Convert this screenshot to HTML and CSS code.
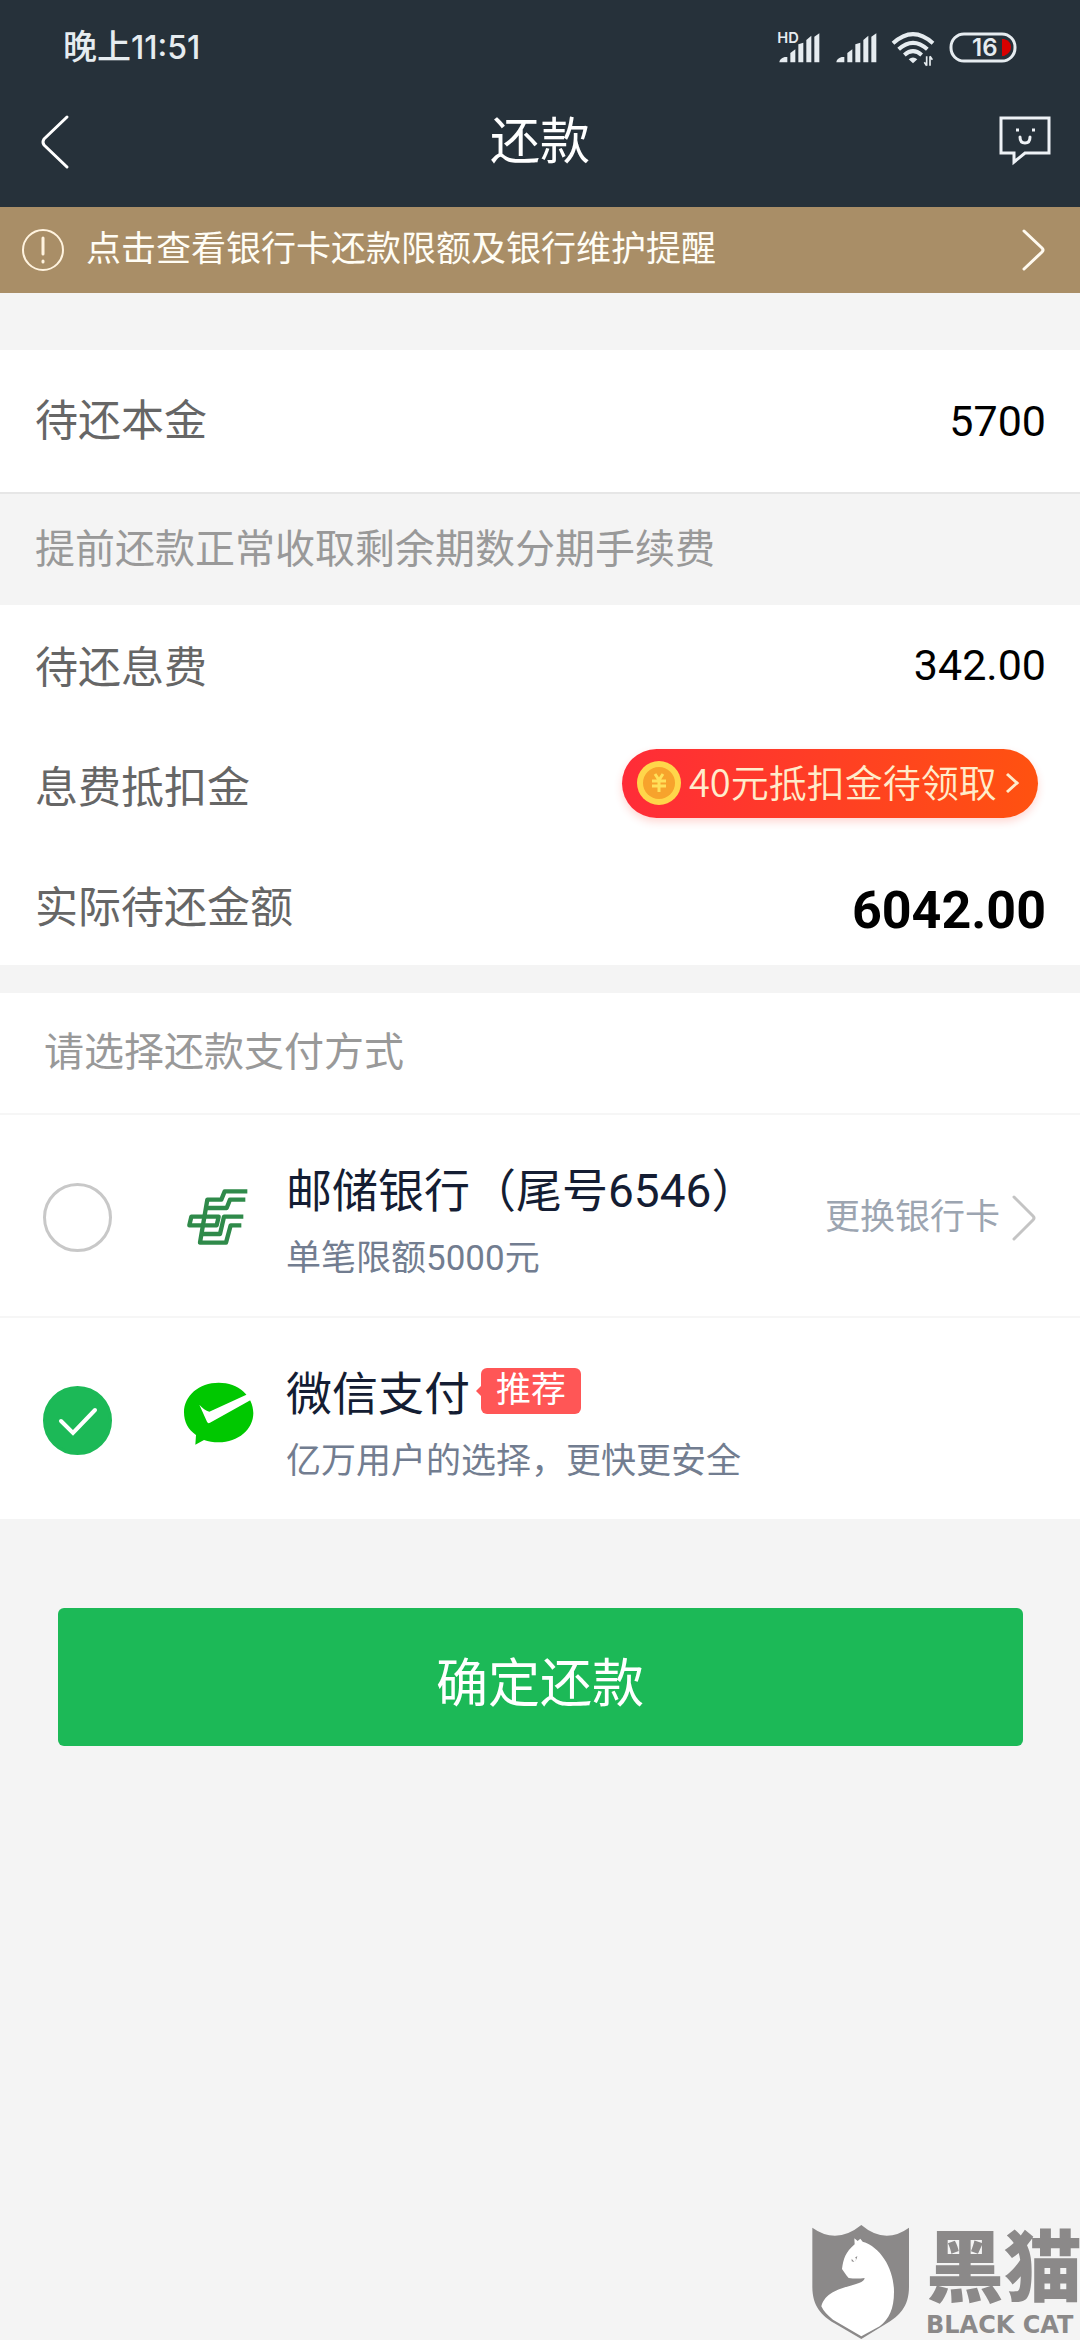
FILE: index.html
```html
<!DOCTYPE html>
<html lang="zh-CN">
<head>
<meta charset="utf-8">
<meta name="viewport" content="width=device-width, initial-scale=1">
<title>还款</title>
<link rel="stylesheet" href="styles.css">
</head>
<body>
<div class="page">
  <div class="top">
    <div class="status">
      <span class="status-time">晚上<time>11:51</time></span>
      <div class="status-icons">
        <svg width="42" height="34" viewBox="0 0 126 102" fill="#e6ecf0">
          <text class="hd" x="-2" y="38">HD</text>
          <path d="M4 97q0-10 16-16h8v16zM37 69l15-11v39H37zM61 55V43l15-5v59H61zM85 30l15-13v80H85zM109 20l15-10v87h-15z"/>
        </svg>
        <svg width="42" height="34" viewBox="0 0 126 102" fill="#e6ecf0">
          <path d="M4 97q0-10 16-16h8v16zM37 69l15-11v39H37zM61 55V43l15-5v59H61zM85 30l15-13v80H85zM109 20l15-10v87h-15z"/>
        </svg>
        <svg width="42" height="34" viewBox="0 0 126 102" fill="none" stroke="#e6ecf0" stroke-width="12">
          <path d="M3 40q60-55 120 0M20 58q43-39 86 0M37 75q26-23 52 0"/>
          <path d="M50 88q13-11 26 0L63 100z" fill="#e6ecf0" stroke="none"/>
          <path d="M104 79v28M114 107V79M97 97l7 10M121 89l-7-10" stroke-width="5"/>
        </svg>
        <svg class="battery" width="68" height="34" viewBox="0 0 68 34">
          <rect x="2" y="4" width="64" height="27" rx="13" fill="none" stroke="#e6ecf0" stroke-width="3"/>
          <path d="M53 9h2q7 2 7 8t-7 9h-2z" fill="#d80000"/>
          <text class="level" x="23" y="26">16</text>
        </svg>
      </div>
    </div>
    <header class="nav">
      <button class="icon-button" type="button" aria-label="返回">
        <svg width="28" height="54" viewBox="0 0 28 54" fill="none" stroke="#fff" stroke-width="3" stroke-linecap="round" stroke-linejoin="round"><path d="M26 2L3 24q-2 3 0 6l23 22"/></svg>
      </button>
      <h1 class="title">还款</h1>
      <button class="icon-button icon-button-end" type="button" aria-label="客服">
        <svg width="52" height="50" viewBox="0 0 52 50" fill="none" stroke="#eef2f6" stroke-width="3"><path d="M2 3h48v35H26l-11 9v-9H2z"/><path d="M21 22q0 6 5 6t5-6" stroke-linecap="round"/><path d="M17 15h3M33 15h3"/></svg>
      </button>
    </header>
  </div>

  <a class="notice" href="#limits">
    <svg width="42" height="44" viewBox="0 0 42 44" fill="none" stroke="#fff3df" stroke-width="2" stroke-linecap="round"><circle cx="21" cy="22" r="20"/><path d="M21 10v16M21 33v1" stroke-width="3"/></svg>
    <span class="notice-text">点击查看银行卡还款限额及银行维护提醒</span>
    <svg width="24" height="42" viewBox="0 0 24 42" fill="none" stroke="#fffaf0" stroke-width="3" stroke-linecap="round" stroke-linejoin="round"><path d="M2 2l18 17q2 2 0 4L2 40"/></svg>
  </a>

  <main>
    <dl class="principal">
      <div class="row row-tall"><dt>待还本金</dt><dd>5700</dd></div>
    </dl>
    <p class="hint">提前还款正常收取剩余期数分期手续费</p>
    <dl class="fees">
      <div class="row"><dt>待还息费</dt><dd>342.00</dd></div>
      <div class="row"><dt>息费抵扣金</dt>
        <dd class="coupon-cell"><button class="coupon" type="button">
          <svg width="44" height="44" viewBox="0 0 44 44"><circle cx="22" cy="22" r="22" fill="#ffd64a"/><circle cx="22" cy="22" r="16" fill="#f7a32c"/><path d="M18 13l4 6 4-6M15 20h14M15 25h14M22 19v12" fill="none" stroke="#ffe05a" stroke-width="3"/></svg>
          <span>40元抵扣金待领取</span>
          <svg width="14" height="22" viewBox="0 0 14 22" fill="none" stroke="#ffeccb" stroke-width="3"><path d="M2 2l10 9-10 9"/></svg>
        </button></dd>
      </div>
      <div class="row"><dt>实际待还金额</dt><dd class="total">6042.00</dd></div>
    </dl>

    <form class="payment">
      <fieldset class="methods">
        <legend class="methods-title">请选择还款支付方式</legend>
        <div class="method">
          <span class="radio"><input type="radio" name="method" id="bank"></span>
          <svg class="logo" width="70" height="70" viewBox="9 9 210 210" fill="none" stroke="#2f8a4a" stroke-width="13" stroke-linejoin="round">
            <path d="M202 34h-68l-10 25H82L60 188h78l14-52h32"/>
            <path d="M196 59h-46l-10 25H78M190 110h-58l-12 52H66M34 110h82l-6 26H28z"/>
          </svg>
          <label class="method-text" for="bank">
            <span class="method-name">邮储银行（尾号6546）</span>
            <span class="method-note">单笔限额5000元</span>
          </label>
          <a class="change" href="#cards">更换银行卡
            <svg width="24" height="46" viewBox="0 0 24 46" fill="none" stroke="#c4c4c4" stroke-width="3" stroke-linecap="round"><path d="M2 2l19 19q2 2 0 4L2 44"/></svg>
          </a>
        </div>
        <div class="method">
          <span class="radio"><input type="radio" name="method" id="wechat" checked><svg class="tick" width="69" height="69" viewBox="0 0 69 69" fill="none" stroke="#fff" stroke-width="4" stroke-linecap="round"><path d="M18 35l12 12 22-23"/></svg></span>
          <svg class="logo" width="70" height="70" viewBox="0 0 210 210">
            <path d="M107-10C48-10 3 29 3 79c0 29 12 52 36 68l-2 29 26-14c13 5 28 7 44 7 59 0 104-39 104-88 0-51-45-91-104-91z" fill="#00c800"/>
            <path d="M49 56q14 16 30 21L200 22l14 14L81 110q-6 4-9-3z" fill="#fff"/>
          </svg>
          <label class="method-text" for="wechat">
            <span class="method-name">微信支付<span class="badge">推荐</span></span>
            <span class="method-note">亿万用户的选择，更快更安全</span>
          </label>
        </div>
      </fieldset>
      <button class="submit" type="submit">确定还款</button>
    </form>
  </main>

  <div class="watermark">
    <svg width="98" height="115" viewBox="0 0 294 345">
      <path d="M1 8q73 52 147-8 71 60 143 8v177c0 60-30 88-65 109l-78 48-82-48C31 273 1 245 1 185z" fill="#8b8989"/>
      <path d="M127 40l10 8 8-7 7 9c55 16 94 83 94 150 0 52-15 82-43 104l-55 30-85-50q-26-20-35-40c14-51 76-56 113-70q16-6 17-15-24 3-48 0c-8-8-15-20-20-27 4-30 10-50 38-74z" fill="#fff"/>
      <path d="M119 101l8 10-8-2zM129 98l7-5q-1 12-8 17l5-9z" fill="#8b8989"/>
    </svg>
    <div class="watermark-text"><span class="watermark-cn">黑猫</span><span class="watermark-en">BLACK CAT</span></div>
  </div>
</div>
</body>
</html>
```
FILE: styles.css
```css
* { box-sizing: border-box; }

body {
  margin: 0;
  background: #f4f4f4;
  font-family: Roboto, "Noto Sans CJK SC", sans-serif;
  color: #000;
}

svg { display: block; flex: none; overflow: visible; }
button { border: 0; margin: 0; padding: 0; font-family: inherit; background: none; }
a { color: inherit; text-decoration: none; }
h1, p, dl, dd { margin: 0; }

.page { position: relative; min-height: 100vh; }

/* status bar and title bar */
.top { background: #26313a; }
.status {
  display: flex;
  align-items: center;
  justify-content: space-between;
  height: 80px;
  padding: 14px 63px 0 63px;
}
.status-time {
  font-family: Inter, "Noto Sans CJK SC", sans-serif;
  font-size: 34px;
  line-height: 40px;
  font-weight: 500;
  color: #e6ecf0;
}
.status-time time { font-size: 32px; }
.status-icons { display: flex; align-items: center; gap: 15px; }
.hd { font: 600 44px Inter, sans-serif; }
.level { font: 600 24px Inter, sans-serif; fill: #e6ecf0; }
.nav {
  display: grid;
  grid-template-columns: 1fr auto 1fr;
  align-items: center;
  height: 127px;
  padding: 0 29px 4px;
}
.icon-button { justify-self: start; padding-left: 12px; }
.icon-button-end { justify-self: end; padding: 0 0 4px; }
.title { font-size: 50px; line-height: 60px; font-weight: 400; color: #fff; }

.notice {
  display: flex;
  align-items: center;
  height: 86px;
  padding: 0 34px 0 22px;
  gap: 22px;
  background: #a98e67;
  color: #fffdf5;
}
.notice-text { flex: 1; font-size: 35px; line-height: 44px; }

/* amounts */
.principal { margin-top: 57px; background: #fff; border-bottom: 2px solid #e6e6e6; }
.fees { background: #fff; }
.row {
  display: flex;
  align-items: center;
  justify-content: space-between;
  min-height: 120px;
  padding: 0 34px 0 35px;
  font-size: 43px;
  line-height: 52px;
}
.row-tall { min-height: 142px; }
.row dt { color: #666; }
.fees dt { padding-top: 5px; }
.row .total { padding-top: 12px; font-size: 52px; font-weight: 700; }
.hint { padding: 30px 35px; font-size: 40px; line-height: 51px; color: #999; }
.row .coupon-cell { padding: 0 8px 4px 0; }
.coupon {
  display: flex;
  align-items: center;
  width: 416px;
  height: 69px;
  padding: 0 15px;
  gap: 8px;
  border-radius: 35px;
  background: linear-gradient(90deg, #ff2c38, #ff5210);
  box-shadow: 0 4px 8px rgba(255, 60, 40, 0.2);
  font-family: "Noto Sans CJK SC", sans-serif;
  font-size: 38px;
  line-height: 48px;
  font-weight: 350;
  color: #ffeccb;
  white-space: nowrap;
}
.coupon span { padding-bottom: 4px; }

/* payment methods */
.methods { margin: 28px 0 0; padding: 0; border: 0; background: #fff; min-width: 0; }
.methods-title {
  float: left;
  width: 100%;
  padding: 35px 44px;
  font-size: 40px;
  line-height: 50px;
  color: #999;
}
.method {
  clear: both;
  display: flex;
  align-items: center;
  min-height: 203px;
  padding: 4px 44px 0 43px;
  border-top: 2px solid #f6f6f6;
}
.radio { display: grid; flex: none; }
.radio input {
  grid-area: 1 / 1;
  appearance: none;
  width: 69px;
  height: 69px;
  margin: 0;
  border: 3px solid #c8c8c8;
  border-radius: 50%;
}
.radio input:checked { border-color: #1cb957; background: #1cb957; }
.tick { grid-area: 1 / 1; pointer-events: none; }
.logo { margin: 0 33px 0 71px; }
.method-text { display: flex; flex: 1; flex-direction: column; gap: 14px; padding-top: 8px; }
.method-name {
  display: flex;
  align-items: center;
  gap: 11px;
  font-size: 46px;
  line-height: 60px;
  color: #141d33;
  white-space: nowrap;
}
.method-note { font-size: 35px; line-height: 48px; color: #727d90; }
.badge {
  position: relative;
  margin-bottom: 6px;
  padding: 0 15px;
  border-radius: 6px;
  background: #ff5656;
  font-size: 35px;
  line-height: 46px;
  color: #fff;
}
.badge::before {
  content: "";
  position: absolute;
  left: -5px;
  top: 18px;
  border: 5px solid transparent;
  border-left-width: 0;
  border-right-color: #ff5656;
}
.change {
  display: flex;
  align-items: center;
  gap: 12px;
  font-size: 35px;
  line-height: 50px;
  color: #9ca5b1;
}
.submit {
  display: block;
  width: calc(100% - 115px);
  height: 138px;
  margin: 89px auto 0;
  padding-top: 16px;
  border-radius: 6px;
  background: #1cb957;
  font-size: 52px;
  line-height: 64px;
  color: #fff;
}

/* watermark over the page corner */
.watermark {
  position: absolute;
  right: 2px;
  bottom: 0;
  display: flex;
  gap: 16px;
  color: #8b8989;
}
.watermark-text { display: flex; flex-direction: column; gap: 12px; width: 152px; }
.watermark-cn { font: 900 78px/74px "Noto Sans CJK SC", sans-serif; white-space: nowrap; }
.watermark-en { font: 700 24px/28px "DejaVu Sans", sans-serif; white-space: nowrap; }
```
